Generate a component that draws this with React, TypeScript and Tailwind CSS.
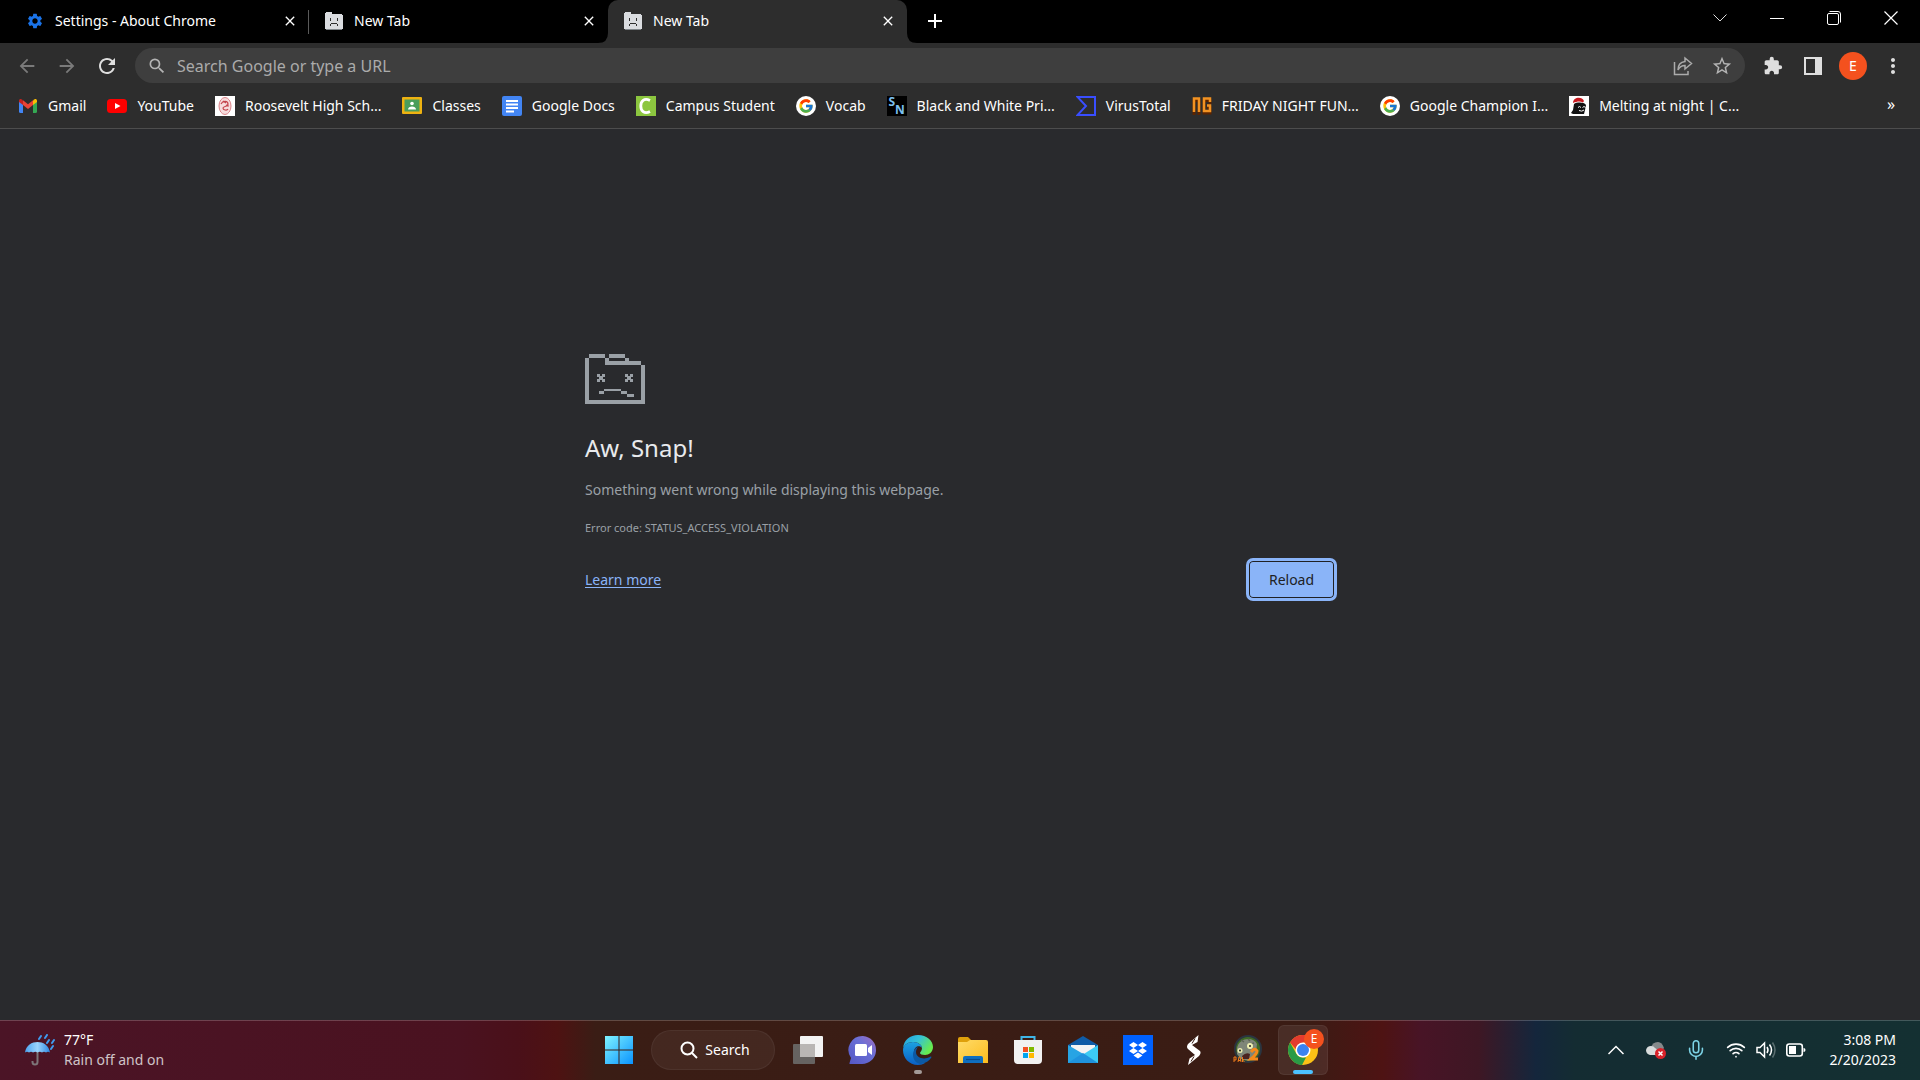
import type { ReactNode } from "react";
import {
  MdArrowBack,
  MdArrowForward,
  MdClose,
  MdExtension,
  MdMoreVert,
  MdRefresh,
  MdSearch,
  MdSettings,
  MdStarBorder,
} from "react-icons/md";
import { FcGoogle } from "react-icons/fc";
import { Mic, Wifi } from "lucide-react";

function SadTabIcon() {
  return (
    <svg viewBox="0 0 18 18" className="size-[18px]">
      <path d="M1 0h6v2h10v1h1v14h-1v1H1v-1H0V1h1z" fill="#dadce0" />
      <path d="M1 17h16v1H1z" fill="#80868b" />
      <path
        d="M5 6h1v3H5zM12 6h1v3h-1zM6 11h6v1H6zM5 12h1v2H5zM12 12h1v2h-1z"
        fill="#2d2d2d"
      />
    </svg>
  );
}

function GmailIcon() {
  return (
    <svg viewBox="0 0 20 20" className="size-5">
      <path d="M1 5v10.500q0 1.500 1.500 1.500H5V8z" fill="#4285f4" />
      <path d="M19 5v10.500q0 1.500-1.500 1.500H15V8z" fill="#34a853" />
      <path d="M15 4.500V9l4-3V4.800C19 2.800 17 2.500 16 3.500z" fill="#fbbc04" />
      <path d="M5 4.500V9L1 6V4.800C1 2.800 3 2.500 4 3.500z" fill="#c5221f" />
      <path d="M5 4.300l5 3.900 5-3.900V9l-5 4-5-4z" fill="#ea4335" />
    </svg>
  );
}

function YouTubeIcon() {
  return (
    <svg viewBox="0 0 20 20" className="size-5">
      <rect y="3" width="20" height="14" rx="3.500" fill="#f00" />
      <path d="M8 7l5.500 3L8 13z" fill="#fff" />
    </svg>
  );
}

function SchoolIcon() {
  return (
    <svg viewBox="0 0 20 20" className="size-5">
      <path d="M0 0h20v20H0z" fill="#fff" />
      <ellipse cx="10" cy="10" rx="6" ry="8.500" fill="#f6dcdd" stroke="#dd8388" />
      <path
        d="M6 8c2-4 7-3 7 0s-5 2-5 4 4 3 5 1M8 5l3 2M11 9l3 1"
        fill="none"
        stroke="#c4454d"
        strokeWidth="1.200"
      />
    </svg>
  );
}

function ClassroomIcon() {
  return (
    <svg viewBox="0 0 20 20" className="size-5">
      <rect y="1" width="20" height="17" rx="1" fill="#eeb211" />
      <path d="M2.500 3.500h15v12h-15z" fill="#4a9d5b" />
      <circle cx="10" cy="7.500" r="1.800" fill="#fff" />
      <path d="M6 13.500c0-4 8-4 8 0z" fill="#fff" />
    </svg>
  );
}

function DocsIcon() {
  return (
    <svg viewBox="0 0 20 20" className="size-5">
      <rect width="20" height="20" rx="2" fill="#4285f4" />
      <path d="M4 4h12v2H4zM4 7.500h12v2H4zM4 11h12v2H4zM4 14.500h8v2H4z" fill="#fff" />
    </svg>
  );
}

function CampusIcon() {
  return (
    <svg viewBox="0 0 20 20" className="size-5">
      <path d="M0 0h20v20H0z" fill="#8cc63f" />
      <path
        d="M14 4.500C8 1.500 4.800 5.500 4.800 10S8 18.500 14 15.500"
        fill="none"
        stroke="#fff"
        strokeWidth="2.800"
      />
    </svg>
  );
}

function GoogleIcon() {
  return (
    <span className="flex size-5 items-center justify-center rounded-full bg-white">
      <FcGoogle className="size-4" />
    </span>
  );
}

function SnIcon() {
  return (
    <span className="flex size-5 justify-center bg-black text-xs leading-3 font-bold text-[#7cc0f0]">
      <span>S</span>
      <span className="pt-2">N</span>
    </span>
  );
}

function VirusTotalIcon() {
  return (
    <svg viewBox="0 0 20 20" className="size-5">
      <path
        d="M1.500 1h17.500v18H1.500L10 10z"
        fill="none"
        stroke="#394eff"
        strokeWidth="2"
      />
    </svg>
  );
}

function NewgroundsIcon() {
  return (
    <svg viewBox="0 0 20 20" className="size-5">
      <path
        d="M2 17V2.500h5V17M18 6V2.500h-6V15h6V9.500h-3"
        fill="none"
        stroke="#5c2400"
        strokeWidth="3"
        transform="translate(0 2)"
      />
      <path
        d="M2 16V2.500h5V16M18 6V2.500h-6V15h6V9.500h-3"
        fill="none"
        stroke="#f29222"
        strokeWidth="2.500"
      />
    </svg>
  );
}

function MeltingIcon() {
  return (
    <svg viewBox="0 0 20 20" className="size-5">
      <path d="M0 0h20v20H0z" fill="#fff" />
      <path d="M5 8c3-2 10-2 12 1l-1 5-1 4H4l-2-1 2-3z" fill="#111" />
      <path d="M4 7c0-6 9-7 11-2l-1 1.500C11 5 8 5.500 4 7z" fill="#c8191e" />
      <path d="M9 11.500q1.500-2 3 0M13.500 11.500q1.500-2 3 0M10 14.500q3 1.500 5-.5" stroke="#fff" fill="none" />
    </svg>
  );
}

const tabs = [
  { title: "Settings - About Chrome", settings: true, active: false },
  { title: "New Tab", settings: false, active: false },
  { title: "New Tab", settings: false, active: true },
];

const bookmarks: { label: string; icon: ReactNode }[] = [
  { label: "Gmail", icon: <GmailIcon /> },
  { label: "YouTube", icon: <YouTubeIcon /> },
  { label: "Roosevelt High Sch...", icon: <SchoolIcon /> },
  { label: "Classes", icon: <ClassroomIcon /> },
  { label: "Google Docs", icon: <DocsIcon /> },
  { label: "Campus Student", icon: <CampusIcon /> },
  { label: "Vocab", icon: <GoogleIcon /> },
  { label: "Black and White Pri...", icon: <SnIcon /> },
  { label: "VirusTotal", icon: <VirusTotalIcon /> },
  { label: "FRIDAY NIGHT FUN...", icon: <NewgroundsIcon /> },
  { label: "Google Champion I...", icon: <GoogleIcon /> },
  { label: "Melting at night | C...", icon: <MeltingIcon /> },
];

function TabStrip() {
  return (
    <header className="flex h-[43px] justify-between bg-black text-white">
      <div className="flex pl-[10px]">
        {tabs.map((tab, i) => (
          <div
            key={i}
            className={
              tab.active
                ? "relative flex w-[299px] items-center rounded-t-[10px] bg-[#2d2d2d] pr-[11px] pb-px pl-4"
                : "relative flex w-[299px] items-center pr-[11px] pb-px pl-4"
            }
          >
            {tab.settings ? (
              <MdSettings className="size-[18px] text-[#1a73e8]" />
            ) : (
              <SadTabIcon />
            )}
            <span className="flex-1 pl-[11px] text-sm">{tab.title}</span>
            <button aria-label="Close tab">
              <MdClose className="size-4" />
            </button>
            {i === 0 && (
              <span className="absolute top-[10px] right-0 h-6 w-px bg-[#5a5a5a]" />
            )}
            {tab.active && (
              <>
                <svg
                  viewBox="0 0 10 10"
                  className="absolute bottom-0 -left-[10px] size-[10px]"
                >
                  <path d="M10 0v10H0Q10 10 10 0" fill="#2d2d2d" />
                </svg>
                <svg
                  viewBox="0 0 10 10"
                  className="absolute -right-[10px] bottom-0 size-[10px]"
                >
                  <path d="M0 0v10h10Q0 10 0 0" fill="#2d2d2d" />
                </svg>
              </>
            )}
          </div>
        ))}
        <button aria-label="New tab" className="ml-5 pb-px">
          <svg viewBox="0 0 16 16" className="size-4">
            <path d="M8 1v14M1 8h14" stroke="#fff" strokeWidth="2" />
          </svg>
        </button>
      </div>
      <div className="flex h-9">
        <button aria-label="Search tabs" className="flex w-14 items-center justify-center">
          <svg viewBox="0 0 14 14" className="size-[14px]" fill="none" stroke="#ddd">
            <path d="M.5 3.500L7 10 13.500 3.500" />
          </svg>
        </button>
        <button aria-label="Minimize" className="flex w-[57px] items-center justify-center">
          <svg viewBox="0 0 14 14" className="size-[14px]" stroke="#fff">
            <path d="M0 7.500h14" />
          </svg>
        </button>
        <button aria-label="Restore" className="flex w-[57px] items-center justify-center">
          <svg viewBox="0 0 14 14" className="size-[14px]" fill="none" stroke="#fff">
            <rect x=".5" y="2.500" width="11" height="11" rx="1.500" />
            <path d="M2.500.5h8.500q2.500 0 2.500 2.500v8.500" />
          </svg>
        </button>
        <button aria-label="Close" className="flex w-[58px] items-center justify-center">
          <svg viewBox="0 0 14 14" className="size-[14px]" stroke="#fff" strokeWidth="1.200">
            <path d="M.5.5l13 13M13.500.5l-13 13" />
          </svg>
        </button>
      </div>
    </header>
  );
}

function Toolbar() {
  return (
    <div className="flex h-[45px] items-center bg-[#2d2d2d] px-[7px] text-[#dedede]">
      <button aria-label="Back" className="flex w-10 justify-center text-[#7a7a7a]">
        <MdArrowBack className="size-[22px]" />
      </button>
      <button aria-label="Forward" className="flex w-10 justify-center text-[#7a7a7a]">
        <MdArrowForward className="size-[22px]" />
      </button>
      <button aria-label="Reload page" className="flex w-10 justify-center">
        <MdRefresh className="size-6" />
      </button>
      <div className="mx-2 flex h-[35px] flex-1 items-center rounded-full bg-[#3e3e3e] px-3">
        <MdSearch className="size-5 text-[#b4b4b4]" />
        <input
          aria-label="Address bar"
          placeholder="Search Google or type a URL"
          className="flex-1 bg-transparent pl-[10px] text-base text-white outline-none placeholder:text-[#ababab]"
        />
        <button aria-label="Share" className="flex w-10 justify-center">
          <svg
            viewBox="0 0 20 20"
            className="size-5"
            fill="none"
            stroke="#ababab"
            strokeWidth="1.500"
          >
            <path d="M1.500 6v12.500H15V15" />
            <path d="M12 2l6.500 5.500L12 13v-3.500c-3.500 0-5.500 1.500-7 4.500 0-5 2.500-8 7-8.500z" />
          </svg>
        </button>
        <button aria-label="Bookmark this tab" className="flex w-[30px] justify-end text-[#b4b4b4]">
          <MdStarBorder className="size-[22px]" />
        </button>
      </div>
      <button aria-label="Extensions" className="flex w-10 justify-center">
        <MdExtension className="size-5" />
      </button>
      <button aria-label="Side panel" className="flex w-10 justify-center">
        <svg viewBox="0 0 18 18" className="size-[18px]">
          <path d="M0 0h18v18H0zM2 2v14h9V2z" fill="#dedede" fillRule="evenodd" />
        </svg>
      </button>
      <button aria-label="Profile" className="flex w-10 justify-center">
        <span className="flex size-7 items-center justify-center rounded-full bg-[#f4511e] text-sm text-white">
          E
        </span>
      </button>
      <button aria-label="Menu" className="flex w-10 justify-center">
        <MdMoreVert className="size-6" />
      </button>
    </div>
  );
}

function BookmarksBar() {
  return (
    <nav className="flex h-[41px] items-center border-b border-[#4d4d4d] bg-[#2d2d2d] pb-1 pl-[18px] text-sm text-white">
      <div className="flex flex-1 items-center gap-[21px]">
        {bookmarks.map((bookmark) => (
          <a key={bookmark.label} href="#" className="flex items-center gap-[10px]">
            {bookmark.icon}
            <span className="whitespace-nowrap">{bookmark.label}</span>
          </a>
        ))}
      </div>
      <button aria-label="More bookmarks" className="w-[58px] pb-1 text-center text-base">
        »
      </button>
    </nav>
  );
}

function CrashPage() {
  return (
    <main className="flex-1 bg-[#292a2d] px-6 pt-[225px] text-[#9aa0a6]">
      <div className="mx-auto max-w-[750px]">
        <svg viewBox="0 0 60 50" className="h-[50px] w-[60px]" fill="#9aa0a6">
          <path d="M4 0h16v4H4zM24 0h16v4H24zM0 4h4v46H0zM20 4h4v7h-4zM40 4h4v4h-4zM20 7h36v4H20zM56 11h4v39h-4zM4 46h52v4H4z" />
          <path d="M12 20h3v3h-3zM17 20h3v3h-3zM14 22h4v4h-4zM12 25h3v3h-3zM17 25h3v3h-3z" />
          <path d="M40 20h3v3h-3zM45 20h3v3h-3zM42 22h4v4h-4zM40 25h3v3h-3zM45 25h3v3h-3z" />
          <path d="M14 37h5v3h-5zM19 35h17v2H19zM36 37h6v3h-6zM42 40h7v3h-7z" />
        </svg>
        <h1 className="mt-7 text-2xl text-[#e8eaed]">Aw, Snap!</h1>
        <p className="mt-[14px] text-sm leading-6">
          Something went wrong while displaying this webpage.
        </p>
        <p className="mt-4 text-[11px] leading-5">Error code: STATUS_ACCESS_VIOLATION</p>
        <div className="mt-[22px] flex items-center justify-between">
          <a href="#" className="text-sm text-[#8ab4f8] underline underline-offset-2">
            Learn more
          </a>
          <button className="h-[39px] w-[87px] rounded-[5px] border border-[#8ab4f8] bg-[#8ab4f8] text-sm text-[#202124] ring-2 ring-[#8ab4f8] inset-ring-1 inset-ring-[#202124]">
            Reload
          </button>
        </div>
      </div>
    </main>
  );
}

function WeatherIcon() {
  return (
    <svg viewBox="0 0 30 32" className="h-8 w-[30px]">
      <defs>
        <linearGradient id="umbrella" x1="0" x2="1">
          <stop offset="0" stopColor="#4ba3f0" />
          <stop offset=".5" stopColor="#9bd3fb" />
          <stop offset="1" stopColor="#2b87e3" />
        </linearGradient>
      </defs>
      <path
        d="M12.500 10v18q0 2.500-2.500 2.500T7.500 28v-1"
        fill="none"
        stroke="#7d7578"
        strokeWidth="2"
      />
      <path
        d="M0 18.500C1 11 7 8 12.500 8S24 11 25 18.500q-2-1.500-4 0-2-1.500-4 0-2-1.500-4.500 0-2-1.500-4.500 0-2-1.500-4 0-2-1.500-4 0z"
        fill="url(#umbrella)"
      />
      <path
        d="M16 2l-2 3M22 1l-2 3M24 6l-2 3M29 6l-2 3M28 12l-2 3"
        stroke="#3f9bf0"
        strokeWidth="2"
        strokeLinecap="round"
      />
    </svg>
  );
}

function WindowsIcon() {
  return (
    <svg viewBox="0 0 30 30" className="size-[30px]">
      <defs>
        <linearGradient id="win" x1="0" y1="0" x2="1" y2="1">
          <stop offset="0" stopColor="#7ff3ff" />
          <stop offset="1" stopColor="#0a93ff" />
        </linearGradient>
      </defs>
      <path d="M1 1h13.500v13.500H1zM15.500 1H29v13.500H15.500zM1 15.500h13.500V29H1zM15.500 15.500H29V29H15.500z" fill="url(#win)" />
    </svg>
  );
}

function TaskViewIcon() {
  return (
    <svg viewBox="0 0 30 30" className="size-[30px]">
      <rect y="9" width="22" height="20" rx="1" fill="#666361" />
      <rect x="7" y="1" width="23" height="21" rx="1" fill="#f3f3f3" />
      <path d="M7 9h15v13H7z" fill="#b9b6b4" />
    </svg>
  );
}

function ChatIcon() {
  return (
    <svg viewBox="0 0 30 30" className="size-[30px]">
      <defs>
        <linearGradient id="chat" x1="0" y1="1" x2="1" y2="0">
          <stop offset="0" stopColor="#5457c4" />
          <stop offset=".6" stopColor="#6a6fd6" />
          <stop offset="1" stopColor="#a06cc0" />
        </linearGradient>
      </defs>
      <path d="M15 1a14 14 0 1 1-2 28H2q-1 0-.5-1L3 23A14 14 0 0 1 15 1z" fill="url(#chat)" />
      <rect x="7" y="9" width="12" height="12" rx="1.500" fill="#fff" />
      <path d="M20 13l4-3v10l-4-3z" fill="#fff" />
    </svg>
  );
}

function EdgeIcon() {
  return (
    <svg viewBox="0 0 30 30" className="size-[30px]">
      <defs>
        <linearGradient id="edgeTop" x1="0" y1="0" x2="1" y2=".5">
          <stop offset="0" stopColor="#1f9fe0" />
          <stop offset=".5" stopColor="#35c1d8" />
          <stop offset="1" stopColor="#66eb4f" />
        </linearGradient>
        <linearGradient id="edgeLow" x1="0" y1="0" x2="0" y2="1">
          <stop offset="0" stopColor="#1ba1e2" />
          <stop offset="1" stopColor="#0b5fc4" />
        </linearGradient>
      </defs>
      <path d="M0 13C1 5 7 0 15 0c9 0 15 6 15 12 0 5-4 8-8 8-3 0-5-1-5-2s2-2 2-5c0-3-4-6-9-6-4 0-8 2-10 6z" fill="url(#edgeTop)" />
      <path d="M0 15C0 10 5 7 10 7c5 0 9 3 9 6-2-3-8-2-8 4 0 7 6 11 11 11-2 1-4 2-7 2C6 30 0 23 0 15z" fill="url(#edgeLow)" />
      <path d="M15 12c-3 1-5 4-5 8 0 5 4 9 8 9 5-1 8-3 10-6 1-1 0-2-1-1-6 3-14 1-14-5 0-2 1-4 2-5z" fill="#0c59a4" />
    </svg>
  );
}

function ExplorerIcon() {
  return (
    <svg viewBox="0 0 30 30" className="size-[30px]">
      <defs>
        <linearGradient id="folder" x1="0" y1="0" x2="1" y2="1">
          <stop offset="0" stopColor="#ffdb68" />
          <stop offset="1" stopColor="#fcbc1e" />
        </linearGradient>
      </defs>
      <path d="M0 4q0-2 2-2h8l3 3-3 5H0z" fill="#dfa00b" />
      <path d="M0 7h9l3-2h16q2 0 2 2v21H0z" fill="url(#folder)" />
      <path d="M5 28v-5q0-2 2-2h16q2 0 2 2v5z" fill="#0f6fc0" />
      <path d="M8 24.500h14" stroke="#0a4b8c" strokeWidth="1.200" />
    </svg>
  );
}

function StoreIcon() {
  return (
    <svg viewBox="0 0 30 30" className="size-[30px]">
      <path d="M8.500 6V2h13v4" fill="none" stroke="#3fb6e8" strokeWidth="2" />
      <path d="M1 5h28v20q0 4-4 4H5q-4 0-4-4z" fill="#f1f1f1" />
      <path d="M10 12h5v5h-5z" fill="#f25022" />
      <path d="M16 12h5v5h-5z" fill="#7fba00" />
      <path d="M10 18h5v5h-5z" fill="#00a4ef" />
      <path d="M16 18h5v5h-5z" fill="#ffb900" />
    </svg>
  );
}

function MailIcon() {
  return (
    <svg viewBox="0 0 30 30" className="size-[30px]">
      <path d="M0 10l15-9 15 9-4 8H4z" fill="#0f5ba6" />
      <path d="M3 10h24v9H3z" fill="#f3f3f3" />
      <path d="M0 10l17 10-2 8H0z" fill="#27a4e4" />
      <path d="M30 10L11 22l4 6h15z" fill="#3ccbf4" />
      <path d="M0 28h30L15 18z" fill="#1f93de" />
    </svg>
  );
}

function DropboxIcon() {
  return (
    <svg viewBox="0 0 30 30" className="size-[30px]">
      <path d="M0 0h30v30H0z" fill="#0061ff" />
      <path
        d="M10.500 7l4.500 3-4.500 3L6 10zM19.500 7l4.500 3-4.500 3-4.500-3zM10.500 13l4.500 3-4.500 3L6 16zM19.500 13l4.500 3-4.500 3-4.500-3zM15 17.500l4.500 3-4.500 3-4.500-3z"
        fill="#fff"
      />
    </svg>
  );
}

function StylusIcon() {
  return (
    <svg viewBox="0 0 30 30" className="size-[30px]">
      <path
        d="M20.500 0L10 9q-2 3 0 5l7 6-5.500 3.500L10 30l11-9q2.500-3 1-5l-8-6 5.500-3z"
        fill="#fff"
      />
      <path d="M14 8.500l3-5M16 21.500l-3 5" stroke="#3a1c14" />
    </svg>
  );
}

function ZombieIcon() {
  return (
    <svg viewBox="0 0 30 30" className="size-[30px]">
      <circle cx="15" cy="14" r="13" fill="#3f6a25" stroke="#2b3540" strokeWidth="2" />
      <path d="M4 13C6 3 20 1 24 9l-1 9-7 8-8-2-4-5z" fill="#7f8678" />
      <path d="M8 5l3 2M15 4l2 2M21 8l-3 1" stroke="#5c6455" strokeWidth="1.500" />
      <circle cx="7" cy="15.500" r="2.500" fill="#eff0b0" />
      <circle cx="17" cy="11" r="3" fill="#eff0b0" />
      <circle cx="7" cy="15.500" r="1" fill="#222" />
      <circle cx="17" cy="11" r="1" fill="#222" />
      <path d="M9 21q4-4 8-2l-1 5h-6z" fill="#4b2320" />
      <path
        d="M18 17q4-5 6-1 0 3-6 8h7"
        fill="none"
        stroke="#f58a1c"
        strokeWidth="3"
      />
      <path
        d="M1 27v-5h2v3H1M5 27l1-5h1l1 5M5 25.500h3M9.500 27v-5M11 24.500l-1.500.5 2 2"
        fill="none"
        stroke="#ef7c1a"
      />
    </svg>
  );
}

function ChromeIcon() {
  return (
    <svg viewBox="0 0 30 30" className="size-[30px]">
      <circle cx="15" cy="15" r="15" fill="#fbc116" />
      <path d="M2 7.500a15 15 0 0 1 26 0H15v15z" fill="#e33b2e" />
      <path d="M2 7.500L8.500 19q2 3.500 6.500 3.500h3L14 30A15 15 0 0 1 2 7.500z" fill="#2a9b46" />
      <circle cx="15" cy="15" r="7.500" fill="#fff" />
      <circle cx="15" cy="15" r="6" fill="#3b82f0" />
    </svg>
  );
}

const apps = [
  { name: "Task view", icon: <TaskViewIcon /> },
  { name: "Chat", icon: <ChatIcon /> },
  { name: "Edge", icon: <EdgeIcon />, running: true },
  { name: "File Explorer", icon: <ExplorerIcon /> },
  { name: "Store", icon: <StoreIcon /> },
  { name: "Mail", icon: <MailIcon /> },
  { name: "Dropbox", icon: <DropboxIcon /> },
  { name: "Stylus", icon: <StylusIcon /> },
  { name: "PvZ 2", icon: <ZombieIcon /> },
];

function SystemTray() {
  return (
    <div className="flex items-center justify-end pr-6">
      <button aria-label="Hidden icons" className="flex w-10 justify-center">
        <svg viewBox="0 0 16 10" className="h-[10px] w-4" fill="none" stroke="#fff" strokeWidth="1.500">
          <path d="M.5 9L8 1.500 15.500 9" />
        </svg>
      </button>
      <span className="flex w-10 justify-center">
        <svg viewBox="0 0 20 20" className="size-5">
          <path d="M5 8q1-6 7-6 4 0 6 6l-3 4H8z" fill="#85898b" />
          <path d="M4 15q-4-1-4-5 1-4 5-4 3 0 4 2l3 2v5z" fill="#d9dcdd" />
          <circle cx="14.500" cy="13.500" r="5.500" fill="#d9222a" />
          <path d="M12.500 11.500l4 4M16.500 11.500l-4 4" stroke="#fff" strokeWidth="1.500" />
        </svg>
      </span>
      <span className="flex w-10 justify-center">
        <Mic className="size-[22px] text-[#7cd3e6]" strokeWidth={1.7} />
      </span>
      <button aria-label="Network, volume and battery" className="ml-[10px] flex items-center gap-[10px]">
        <Wifi className="size-5" strokeWidth={2} />
        <svg viewBox="0 0 20 20" className="size-5" fill="none" stroke="#fff" strokeWidth="1.500">
          <path d="M1 7.500h3L8.500 3v14L4 12.500H1z" />
          <path d="M11 7q2 3 0 6M13.500 4.500q4 5.500 0 11" />
          <path d="M16.500 2.500q5 7.500 0 15" stroke="#5b6e70" />
        </svg>
        <svg viewBox="0 0 20 20" className="size-5">
          <rect x=".8" y="4" width="15.500" height="12" rx="2.500" fill="none" stroke="#fff" strokeWidth="1.600" />
          <path d="M3 6h7v8H3zM17.500 8q2 0 2 2t-2 2z" fill="#fff" />
        </svg>
      </button>
      <div className="w-[90px] text-right text-sm leading-5">
        <div>3:08 PM</div>
        <div>2/20/2023</div>
      </div>
    </div>
  );
}

function Taskbar() {
  return (
    <footer className="grid h-[60px] grid-cols-[1fr_auto_1fr] border-t border-white/20 bg-[linear-gradient(90deg,#4b1426_0%,#4a1220_24%,#4a1019_27%,#4e1212_29%,#3a1d15_31%,#3a1c14_68%,#4e1313_72%,#481426_74%,#3e1724_77%,#14263c_80%,#142c32_82%,#143032_100%)] pb-0.5 text-white">
      <div className="flex items-center pl-[25px]">
        <WeatherIcon />
        <div className="pl-[9px] text-sm leading-5">
          <div>77°F</div>
          <div className="text-[#cfc3c7]">Rain off and on</div>
        </div>
      </div>
      <div className="flex items-center pl-0.5">
        <button aria-label="Start" className="flex w-[50px] justify-center">
          <WindowsIcon />
        </button>
        <button className="mr-2 ml-[7px] flex h-10 w-[124px] items-center justify-center gap-[7px] rounded-full border border-white/5 bg-white/5 pl-1 text-sm">
          <svg viewBox="0 0 18 18" className="size-[18px]" fill="none" stroke="#fff" strokeWidth="2">
            <circle cx="7.500" cy="7.500" r="6" />
            <path d="M12 12l5 5" />
          </svg>
          Search
        </button>
        <div className="flex gap-[5px]">
          {apps.map((app) => (
            <button
              key={app.name}
              aria-label={app.name}
              className="relative flex size-[50px] items-center justify-center"
            >
              {app.icon}
              {app.running && (
                <span className="absolute bottom-px left-[21px] h-1 w-2 rounded-full bg-[#a39a97]" />
              )}
            </button>
          ))}
          <button
            aria-label="Chrome"
            className="relative flex size-[50px] items-center justify-center rounded-md border border-white/5 bg-white/8"
          >
            <ChromeIcon />
            <span className="absolute top-[3px] right-[3px] flex size-5 items-center justify-center rounded-full bg-[#f4511e] text-xs">
              E
            </span>
            <span className="absolute bottom-0 left-[14px] h-1 w-5 rounded-full bg-[#4cc2ff]" />
          </button>
        </div>
      </div>
      <SystemTray />
    </footer>
  );
}

export default function App() {
  return (
    <div className="flex min-h-screen flex-col font-['Segoe_UI','Noto_Sans',sans-serif]">
      <TabStrip />
      <Toolbar />
      <BookmarksBar />
      <CrashPage />
      <Taskbar />
    </div>
  );
}
